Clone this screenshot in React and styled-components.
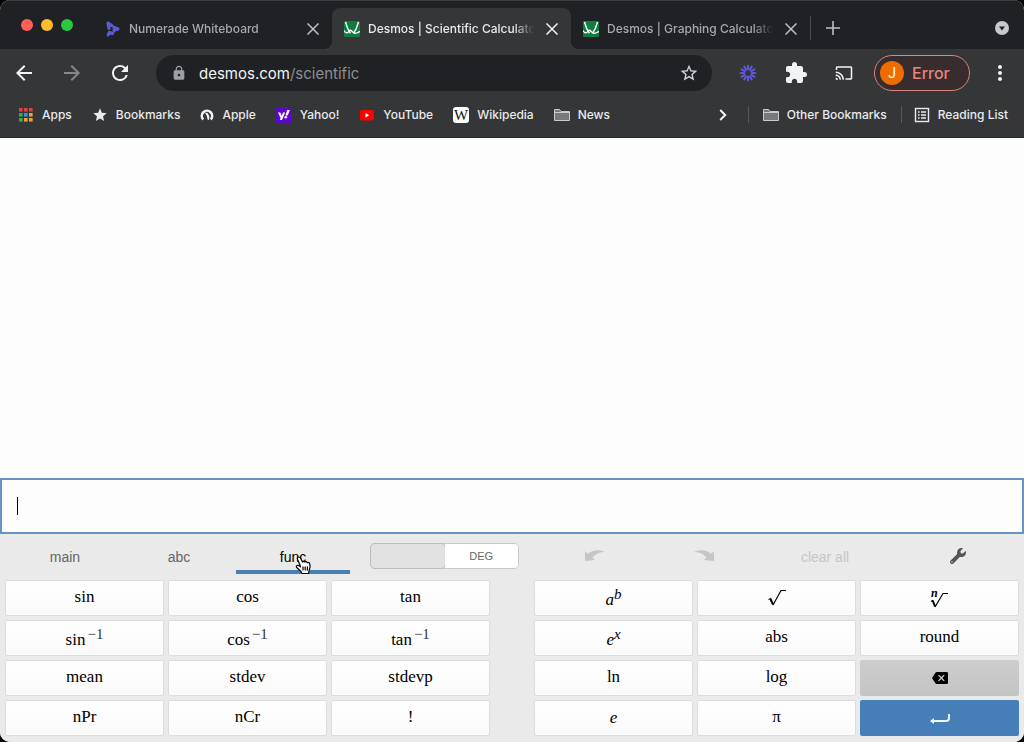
import { useState } from "react";
import styled, { createGlobalStyle } from "styled-components";
import {
  MdArrowBack,
  MdArrowForward,
  MdBackspace,
  MdCast,
  MdExtension,
  MdLock,
  MdMoreVert,
  MdRefresh,
  MdStar,
  MdStarBorder,
} from "react-icons/md";
import { FaWrench } from "react-icons/fa";

const GlobalStyle = createGlobalStyle`
  * {
    box-sizing: border-box;
  }

  body {
    margin: 0;
    background: #000;
    font-family: Inter, "Liberation Sans", sans-serif;
  }

  button {
    border: none;
    padding: 0;
    background: none;
    color: inherit;
    font: inherit;
    cursor: pointer;
  }

  svg {
    display: block;
    flex-shrink: 0;
  }
`;

const Window = styled.div`
  display: flex;
  flex-direction: column;
  min-height: 100vh;
  border-radius: 10px;
  overflow: hidden;
  background: #fdfdfd;
`;

/* ---------- browser ---------- */

const TabStrip = styled.div`
  display: flex;
  height: 49px;
  padding: 7px 15px 0 21px;
  background: #202124;
  border-top: 1px solid #3c3d40;
  color: #bdc1c6;
`;

const Lights = styled.div`
  display: flex;
  gap: 8px;
  width: 72px;
  padding-top: 11px;
`;

const Light = styled.span`
  width: 12px;
  height: 12px;
  border-radius: 50%;
  background: ${(props) => props.$color};
`;

const Tab = styled.div`
  position: relative;
  display: flex;
  align-items: center;
  width: 239px;
  padding: 0 13px 0 12px;
  border-radius: 8px 8px 0 0;
  background: ${(props) => (props.$active ? "#353638" : "transparent")};
  color: ${(props) => (props.$active ? "#e8eaed" : "#a6a9ad")};

  &::before,
  &::after {
    content: "";
    display: ${(props) => (props.$active ? "block" : "none")};
    position: absolute;
    bottom: 0;
    width: 8px;
    height: 8px;
  }

  &::before {
    right: 100%;
    background: radial-gradient(circle at 0 0, transparent 8px, #353638 8px);
  }

  &::after {
    left: 100%;
    background: radial-gradient(circle at 100% 0, transparent 8px, #353638 8px);
  }
`;

const TabTitle = styled.span`
  flex: 1;
  margin: 0 12px 0 8px;
  overflow: hidden;
  white-space: nowrap;
  font-size: 12px;
  font-weight: 500;
  line-height: 20px;
  mask-image: linear-gradient(to right, #000 88%, transparent);
`;

const StripDivider = styled.span`
  width: 1px;
  height: 24px;
  margin: 8px 15px 0 0;
  background: #4a4c50;
`;

const StripButton = styled.button`
  display: flex;
  align-items: center;
  height: 40px;
  margin-left: ${(props) => (props.$end ? "auto" : "0")};
`;

const Toolbar = styled.div`
  display: flex;
  align-items: center;
  height: 48px;
  background: #353638;
  color: #f1f3f4;
`;

const ToolButton = styled.button`
  display: flex;
  align-items: center;
  justify-content: center;
  width: 48px;
  height: 36px;
  color: ${(props) => (props.$dim ? "#85878a" : "inherit")};
`;

const AddressBar = styled.div`
  display: flex;
  align-items: center;
  flex: 1;
  height: 36px;
  margin: 0 12px;
  padding: 0 13px 0 15px;
  border-radius: 18px;
  background: #202124;
  color: #9aa0a6;
`;

const Url = styled.a`
  flex: 1;
  margin-left: 12px;
  color: #8b8e92;
  font-size: 15px;
  text-decoration: none;

  span {
    color: #f1f3f4;
  }
`;

const Profile = styled.button`
  display: flex;
  align-items: center;
  gap: 8px;
  width: 96px;
  height: 36px;
  margin: 0 6px;
  padding-left: 5px;
  border: 1px solid #d98680;
  border-radius: 18px;
  background: #372c2e;
  color: #e9857f;
  font-size: 16px;
  font-weight: 500;
`;

const Avatar = styled.span`
  width: 24px;
  height: 24px;
  border-radius: 50%;
  background: #ef6c00;
  color: #fff;
  font-family: Roboto, sans-serif;
  font-size: 14px;
  font-weight: 400;
  line-height: 24px;
`;

const BookmarkBar = styled.nav`
  display: flex;
  align-items: center;
  height: 41px;
  padding: 0 16px 5px 18px;
  background: #353638;
  border-bottom: 1px solid #2b2c2f;
  color: #e8eaed;
`;

const Bookmark = styled.a`
  display: flex;
  align-items: center;
  gap: 8px;
  color: inherit;
  font-size: 12px;
  font-weight: 500;
  text-decoration: none;
  white-space: nowrap;
`;

const BookmarkList = styled.div`
  display: flex;
  gap: 20px;
`;

const BarDivider = styled.span`
  width: 1px;
  height: 17px;
  margin-right: ${(props) => (props.$tight ? "12px" : "14px")};
  margin-left: ${(props) => (props.$tight ? "14px" : "0")};
  background: #56585c;
`;

const More = styled.button`
  margin: 0 21px 0 auto;
`;

/* ---------- calculator ---------- */

const Paper = styled.main`
  display: flex;
  flex-direction: column;
  flex: 1;
`;

const History = styled.div`
  flex: 1;
`;

const Expression = styled.label`
  display: flex;
  align-items: center;
  height: 56px;
  padding-left: 15px;
  border: 2px solid #6794c4;
`;

const Caret = styled.span`
  width: 1px;
  height: 18px;
  background: #000;
`;

const ExpressionInput = styled.input`
  flex: 1;
  height: 40px;
  border: none;
  outline: none;
  background: transparent;
  font-family: "Liberation Serif", serif;
  font-size: 20px;
`;

const Keypad = styled.div`
  display: grid;
  grid-template-columns: repeat(2, minmax(0, 1fr));
  column-gap: 44px;
  padding: 0 5px 6px;
  background: #eaeaea;
  font-family: "Liberation Sans", Arial, sans-serif;
`;

const Options = styled.div`
  display: flex;
  align-items: flex-start;
  height: 46px;
  padding-left: 3px;
`;

const Actions = styled.div`
  display: grid;
  grid-template-columns: 5fr 4fr 6fr 5fr;
  height: 46px;
`;

const PadTab = styled.button`
  flex-shrink: 0;
  width: 114px;
  height: 40px;
  padding-top: 9px;
  border-bottom: 4px solid ${(props) => (props.$active ? "#4a7fb5" : "transparent")};
  color: ${(props) => (props.$active ? "#000" : "#666")};
  font-size: 14px;
`;

const FuncTab = styled.div`
  position: relative;
  flex-shrink: 0;
`;

const Pointer = styled.svg`
  position: absolute;
  top: 21px;
  left: 59px;
  pointer-events: none;
`;

const Toggle = styled.div`
  display: flex;
  flex-shrink: 0;
  width: 149px;
  height: 26px;
  margin: 9px 0 0 20px;
  border: 1px solid #c8c8c8;
  border-radius: 5px;
  background: #fff;
`;

const ToggleButton = styled.button`
  flex: 1;
  border-radius: 4px;
  background: ${(props) => (props.$on ? "#e1e1e1" : "#fff")};
  box-shadow: ${(props) => (props.$on ? "0 0 0 1px #bdbdbd" : "none")};
  color: #666;
  font-size: 11px;
`;

const Action = styled.button`
  display: flex;
  align-items: center;
  justify-content: center;
  padding-bottom: ${(props) => (props.$text ? "0" : "2px")};
  color: ${(props) => (props.$dim ? "#c6c6c6" : "#555")};
  font-size: 14px;
`;

const Keys = styled.div`
  display: grid;
  grid-template-columns: repeat(3, minmax(0, 1fr));
  grid-auto-rows: 36px;
  gap: 4px;
`;

const keyColors = {
  plain: "linear-gradient(#fff, #fafafa)",
  gray: "linear-gradient(#cdcdcd, #c4c4c4)",
  blue: "#467fb7",
};

const Key = styled.button`
  display: flex;
  align-items: center;
  justify-content: center;
  border: 1px solid ${(props) => (props.$kind === "plain" ? "#dcdcdc" : "transparent")};
  border-radius: 2px;
  background: ${(props) => keyColors[props.$kind]};
  background-origin: border-box;
  color: ${(props) => (props.$kind === "blue" ? "#e9f8ff" : "#000")};
  font-family: "Liberation Serif", "Times New Roman", serif;
  font-size: 17px;
  line-height: 20px;

  sup {
    font-size: 15px;
    line-height: 0;
    vertical-align: 6px;
  }
`;

const Power = styled.span`
  padding-top: 4px;

  sup {
    margin-left: ${(props) => (props.$soft ? "2px" : "0")};
    color: ${(props) => (props.$soft ? "#333" : "inherit")};
  }
`;

const KeyText = styled.span`
  padding-bottom: 2px;
`;

/* ---------- icons ---------- */

const Close = ({ color }) => (
  <svg width="12" height="12" viewBox="0 0 12 12" stroke={color} strokeWidth="1.5">
    <path d="M.5.5l11 11M11.5.5l-11 11" />
  </svg>
);

const NumeradeIcon = () => (
  <svg width="16" height="18" viewBox="0 0 16 18" fill="none" stroke="#5b5bd6" strokeLinecap="round" strokeLinejoin="round">
    <path d="M3 3.200L6.800 5.500M3 3.200L4 8.500" strokeWidth="3.200" />
    <path d="M9 7.500L13 9 9 10.200" strokeWidth="3.200" />
    <path d="M3.200 14.800L4.500 12.500 7.500 13.500" strokeWidth="3.200" />
    <path d="M6.500 5.500L9 7M8 13l1.500-2.500" strokeWidth="1.800" />
  </svg>
);

const DesmosIcon = () => (
  <svg width="16" height="16" viewBox="0 0 16 16" fill="none">
    <rect width="16" height="16" rx="1" fill="#107c3f" />
    <path d="M1.500 1C2.500 5 4 9 6.500 12.200M14.500 1C13.500 5 12 9 9.500 12.200" stroke="#fff" strokeWidth="1.400" />
    <path d="M0 9.500c1.500 3 3.500 2.800 5 .8 1.200-1.600 2-1.300 3 0s1.500 2 3.500 2S14.500 11 16 10.500" stroke="#fff" strokeWidth="1.400" />
  </svg>
);

const SunIcon = () => (
  <svg width="18" height="18" viewBox="-9 -9 18 18" stroke="#5f57dd" strokeWidth="2.100" strokeLinecap="round">
    {[0, 30, 60, 90, 120, 150, 180, 210, 240, 270, 300, 330].map((angle) => (
      <path key={angle} d="M0-3.800V-7.300" transform={`rotate(${angle})`} />
    ))}
  </svg>
);

const appColors = ["#d9453b", "#d9453b", "#d9453b", "#3aa757", "#3b8bea", "#efa32c", "#3aa757", "#efa32c", "#efa32c"];

const AppsIcon = () => (
  <svg width="16" height="16" viewBox="0 0 16 16">
    {appColors.map((color, i) => (
      <rect key={i} x={1 + (i % 3) * 5} y={1 + Math.floor(i / 3) * 5} width="3.600" height="3.600" fill={color} />
    ))}
  </svg>
);

const AppleIcon = () => (
  <svg width="14" height="14" viewBox="0 0 14 14" fill="none">
    <path d="M3.200 11.500A5.200 5.200 0 1 1 10.800 11.500" stroke="#f1f3f4" strokeWidth="2.600" />
    <path d="M5 4.500l2.500.5 2 3.500-.5 3.500-1.500-.5-.5-3z" fill="#f1f3f4" />
  </svg>
);

const YahooIcon = () => (
  <svg width="16" height="16" viewBox="0 0 16 16">
    <rect width="16" height="16" rx="1" fill="#5b08c9" />
    <path d="M2 5.500h2.300l1.400 3.200 1.300-3.200h2.200L6 13H3.800l.8-1.900z" fill="#fff" />
    <path d="M11.200 3h2.700l-2.200 5.500H9.400z" fill="#fff" />
    <circle cx="9.800" cy="10.300" r="1.300" fill="#fff" />
  </svg>
);

const YouTubeIcon = () => (
  <svg width="16" height="16" viewBox="0 0 16 16">
    <rect x="1" y="3" width="14" height="10.500" rx="2" fill="#f00" />
    <path d="M6.500 6v4.600l3.800-2.300z" fill="#fff" />
  </svg>
);

const WikipediaIcon = () => (
  <svg width="16" height="16" viewBox="0 0 16 16">
    <rect width="16" height="16" rx="3" fill="#fff" />
    <text x="8" y="13" textAnchor="middle" fill="#111" fontFamily="Liberation Serif, serif" fontSize="15">W</text>
  </svg>
);

const FolderIcon = () => (
  <svg width="16" height="16" viewBox="0 0 16 16" fill="#77797b" stroke="#c9cbcd">
    <path d="M.5 13.500v-11h5l1.500 2h8.500v9z" />
    <path d="M.5 5.500h15" />
  </svg>
);

const ReadingIcon = () => (
  <svg width="16" height="16" viewBox="0 0 16 16" fill="none" stroke="#e8eaed" strokeWidth="1.400">
    <rect x="1.500" y="1.500" width="13" height="13" />
    <path d="M4 5h1.600M4 8h1.600M4 11h1.600M7 5h5M7 8h5M7 11h5" />
  </svg>
);

const UndoIcon = ({ flip }) => (
  <svg width="22" height="14" viewBox="0 0 22 14" fill="currentColor">
    <path
      d="M1 2.500l3 2.300C8 .8 15 .2 21 2.800 15.500 3 12 5 8.500 8.300L11 11 1 12z"
      transform={flip ? "translate(22 0) scale(-1 1)" : undefined}
    />
  </svg>
);

const RootIcon = () => (
  <svg width="18" height="18" viewBox="0 0 18 18" fill="none" stroke="#000">
    <path d="M.5 10.500l2-1.200" />
    <path d="M2.200 9.500L5 15.500" strokeWidth="2" />
    <path d="M5 16L13 1.500H18" strokeWidth="1.200" />
  </svg>
);

const NthRootIcon = () => (
  <svg width="20" height="26" viewBox="0 0 20 26" fill="none" stroke="#000">
    <text x="1" y="12" fill="#000" stroke="none" fontFamily="Liberation Serif, serif" fontSize="12" fontStyle="italic" fontWeight="700">n</text>
    <path d="M1 16.500l2-1.200M5 22L13 8.500h5" strokeWidth="1.200" />
    <path d="M2.700 15.500L5 21.500" strokeWidth="2" />
  </svg>
);

const EnterIcon = () => (
  <svg width="22" height="12" viewBox="0 0 22 12" fill="none" stroke="currentColor" strokeWidth="2">
    <path d="M4 9h13q3 0 3-3V2" />
    <path d="M1 9l4-3v6z" fill="currentColor" stroke="none" />
  </svg>
);

/* ---------- content ---------- */

const tabs = [
  { title: "Numerade Whiteboard", icon: <NumeradeIcon /> },
  { title: "Desmos | Scientific Calculator", icon: <DesmosIcon />, active: true },
  { title: "Desmos | Graphing Calculator", icon: <DesmosIcon /> },
];

const bookmarks = [
  { name: "Apps", icon: <AppsIcon /> },
  { name: "Bookmarks", icon: <MdStar size={16} /> },
  { name: "Apple", icon: <AppleIcon /> },
  { name: "Yahoo!", icon: <YahooIcon /> },
  { name: "YouTube", icon: <YouTubeIcon /> },
  { name: "Wikipedia", icon: <WikipediaIcon /> },
  { name: "News", icon: <FolderIcon /> },
];

const inverse = (name) => (
  <Power $soft>
    {name}
    <sup>−1</sup>
  </Power>
);

const functionKeys = [
  { id: "sin", label: "sin" },
  { id: "cos", label: "cos" },
  { id: "tan", label: "tan" },
  { id: "arcsin", label: inverse("sin") },
  { id: "arccos", label: inverse("cos") },
  { id: "arctan", label: inverse("tan") },
  { id: "mean", label: "mean" },
  { id: "stdev", label: "stdev" },
  { id: "stdevp", label: "stdevp" },
  { id: "nPr", label: "nPr" },
  { id: "nCr", label: "nCr" },
  { id: "factorial", label: "!" },
];

const commandKeys = [
  { id: "power", label: <Power><i>a<sup>b</sup></i></Power> },
  { id: "square root", label: <RootIcon /> },
  { id: "nth root", label: <NthRootIcon /> },
  { id: "exp", label: <Power><i>e<sup>x</sup></i></Power> },
  { id: "abs", label: "abs" },
  { id: "round", label: "round" },
  { id: "ln", label: "ln" },
  { id: "log", label: "log" },
  { id: "backspace", label: <MdBackspace size={16} />, kind: "gray" },
  { id: "e", label: <i>e</i> },
  { id: "pi", label: "π" },
  { id: "enter", label: <EnterIcon />, kind: "blue" },
];

const KeyGrid = ({ keys }) => (
  <Keys>
    {keys.map((item) => (
      <Key key={item.id} aria-label={item.id} $kind={item.kind || "plain"}>
        {typeof item.label === "string" ? <KeyText>{item.label}</KeyText> : item.label}
      </Key>
    ))}
  </Keys>
);

const Browser = () => (
  <header>
    <TabStrip>
      <Lights>
        <Light $color="#ff5f57" />
        <Light $color="#febc2e" />
        <Light $color="#28c840" />
      </Lights>
      {tabs.map((tab) => (
        <Tab key={tab.title} $active={tab.active}>
          {tab.icon}
          <TabTitle>{tab.title}</TabTitle>
          <button aria-label="Close tab">
            <Close color={tab.active ? "#f1f3f4" : "#bdc1c6"} />
          </button>
        </Tab>
      ))}
      <StripDivider />
      <StripButton aria-label="New tab">
        <svg width="14" height="14" viewBox="0 0 14 14" stroke="currentColor" strokeWidth="1.600">
          <path d="M7 0v14M0 7h14" />
        </svg>
      </StripButton>
      <StripButton $end aria-label="Search tabs">
        <svg width="14" height="14" viewBox="0 0 14 14">
          <circle cx="7" cy="7" r="7" fill="#c6c9cc" />
          <path d="M4 5.500h6L7 9.500z" fill="#202124" />
        </svg>
      </StripButton>
    </TabStrip>

    <Toolbar>
      <ToolButton aria-label="Back"><MdArrowBack size={24} /></ToolButton>
      <ToolButton $dim aria-label="Forward"><MdArrowForward size={24} /></ToolButton>
      <ToolButton aria-label="Reload"><MdRefresh size={24} /></ToolButton>
      <AddressBar>
        <MdLock size={16} />
        <Url href="#scientific"><span>desmos.com</span>/scientific</Url>
        <MdStarBorder size={20} color="#d5d7da" />
      </AddressBar>
      <ToolButton aria-label="Numerade"><SunIcon /></ToolButton>
      <ToolButton aria-label="Extensions"><MdExtension size={24} /></ToolButton>
      <ToolButton aria-label="Cast"><MdCast size={18} /></ToolButton>
      <Profile>
        <Avatar>J</Avatar>
        Error
      </Profile>
      <ToolButton aria-label="Menu"><MdMoreVert size={24} /></ToolButton>
    </Toolbar>

    <BookmarkBar>
      <BookmarkList>
        {bookmarks.map((item) => (
          <Bookmark key={item.name} href="#bookmark">
            {item.icon}
            {item.name}
          </Bookmark>
        ))}
      </BookmarkList>
      <More aria-label="More bookmarks">
        <svg width="8" height="12" viewBox="0 0 8 12" fill="none" stroke="#f1f3f4" strokeWidth="2">
          <path d="M1.200 1l5 5-5 5" />
        </svg>
      </More>
      <BarDivider />
      <Bookmark href="#other">
        <FolderIcon />
        Other Bookmarks
      </Bookmark>
      <BarDivider $tight />
      <Bookmark href="#reading">
        <ReadingIcon />
        Reading List
      </Bookmark>
    </BookmarkBar>
  </header>
);

const App = () => {
  const [expression, setExpression] = useState("");
  const [degrees, setDegrees] = useState(false);

  return (
    <Window>
      <GlobalStyle />
      <Browser />
      <Paper>
        <History />
        <Expression>
          <Caret />
          <ExpressionInput
            aria-label="Expression"
            value={expression}
            onChange={(e) => setExpression(e.target.value)}
          />
        </Expression>
        <Keypad>
          <Options>
            <PadTab>main</PadTab>
            <PadTab>abc</PadTab>
            <FuncTab>
              <PadTab $active>func</PadTab>
              <Pointer width="17" height="20" viewBox="0 0 16 20" fill="#fff" stroke="#000" strokeWidth="1.200" strokeLinejoin="round">
                <path d="M4.500 10L2 4.200Q1.500 2.200 3 2T5.300 3.500L7 7Q8 5.800 9.300 7q1.500-1 2.500.7 2-.8 2.500 1.300.9 3-.6 6L13 18.500H6.500L5.500 16.500 1.200 12.500Q.2 11 1.800 10.500T5 11.800z" />
                <path d="M7.500 11.500v4M9.700 11.500v4M11.900 11.500v4" />
              </Pointer>
            </FuncTab>
            <Toggle>
              <ToggleButton $on={!degrees} aria-label="Radians" onClick={() => setDegrees(false)} />
              <ToggleButton $on={degrees} onClick={() => setDegrees(true)}>DEG</ToggleButton>
            </Toggle>
          </Options>
          <Actions>
            <Action $dim aria-label="Undo"><UndoIcon /></Action>
            <Action $dim aria-label="Redo"><UndoIcon flip /></Action>
            <Action $dim $text>clear all</Action>
            <Action aria-label="Settings"><FaWrench size={16} /></Action>
          </Actions>
          <KeyGrid keys={functionKeys} />
          <KeyGrid keys={commandKeys} />
        </Keypad>
      </Paper>
    </Window>
  );
};

export default App;
